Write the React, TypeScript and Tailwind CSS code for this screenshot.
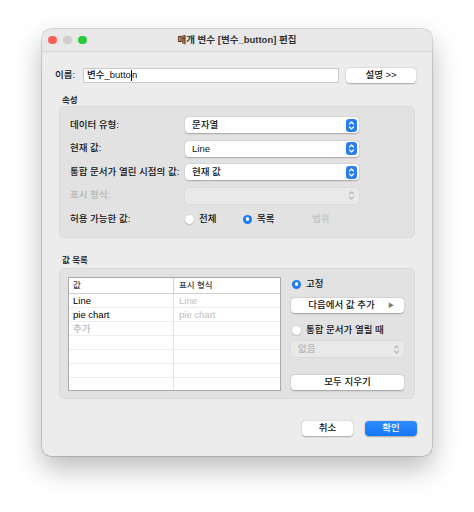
import React from "react";

const FONT = { fontFamily: '"Liberation Sans", "Noto Sans CJK KR", sans-serif' };

function Stepper({ disabled }: { disabled?: boolean }) {
  if (disabled) {
    return (
      <svg width="11" height="13" viewBox="0 0 11 13">
        <path d="M3.5 5 L5.5 3 L7.5 5" stroke="#b8b8b8" strokeWidth="1.1" fill="none" strokeLinecap="round" strokeLinejoin="round" />
        <path d="M3.5 8 L5.5 10 L7.5 8" stroke="#b8b8b8" strokeWidth="1.1" fill="none" strokeLinecap="round" strokeLinejoin="round" />
      </svg>
    );
  }
  return (
    <svg width="11" height="13" viewBox="0 0 11 13">
      <rect x="0" y="0" width="11" height="13" rx="3" fill="#2a7ef3" />
      <path d="M3.5 5 L5.5 3 L7.5 5" stroke="#fff" strokeWidth="1.2" fill="none" strokeLinecap="round" strokeLinejoin="round" />
      <path d="M3.5 8 L5.5 10 L7.5 8" stroke="#fff" strokeWidth="1.2" fill="none" strokeLinecap="round" strokeLinejoin="round" />
    </svg>
  );
}

function Select({ value, disabled, width = "w-[174px]" }: { value: string; disabled?: boolean; width?: string }) {
  return (
    <div
      className={`${width} h-[16px] rounded-[4px] flex items-center justify-between pl-[7px] pr-[2px] ${
        disabled
          ? "bg-[#e9e9e9] shadow-[0_0_0_0.5px_rgba(0,0,0,0.06)] text-[#b3b3b3]"
          : "bg-white shadow-[0_0.5px_1.5px_rgba(0,0,0,0.28)] text-[#111]"
      }`}
    >
      <span className="leading-none">{value}</span>
      <Stepper disabled={disabled} />
    </div>
  );
}

function Radio({ state }: { state: "on" | "off" | "disabled" }) {
  if (state === "on")
    return (
      <span className="w-[9px] h-[9px] rounded-full bg-[#1f7bf2] flex items-center justify-center shrink-0">
        <span className="w-[3.5px] h-[3.5px] rounded-full bg-white" />
      </span>
    );
  if (state === "disabled") return <span className="w-[9px] h-[9px] rounded-full bg-[#e2e2e2] shrink-0" />;
  return <span className="w-[9px] h-[9px] rounded-full bg-white shadow-[0_0.5px_1.5px_rgba(0,0,0,0.3)] shrink-0" />;
}

function Button({ children, className = "" }: { children: React.ReactNode; className?: string }) {
  return (
    <div
      className={`h-[15px] rounded-[4px] bg-white shadow-[0_0.5px_1.5px_rgba(0,0,0,0.3)] flex items-center justify-center text-[#111] ${className}`}
    >
      {children}
    </div>
  );
}

export default function App() {
  const rows = [
    { v: "Line", f: "Line" },
    { v: "pie chart", f: "pie chart" },
    { v: "추가", f: "", add: true },
    { v: "", f: "" },
    { v: "", f: "" },
    { v: "", f: "" },
    { v: "", f: "" },
  ];
  return (
    <div className="w-[474px] h-[512px] bg-white overflow-hidden text-[9.5px] font-medium text-[#111]" style={FONT}>
      <div className="ml-[42px] mt-[29px] w-[390px] h-[427px] rounded-[9px] bg-[#ececec] shadow-[0_12px_28px_rgba(0,0,0,0.28),0_0_0_0.5px_rgba(0,0,0,0.25)] flex flex-col overflow-hidden">
        {/* Title bar */}
        <div className="h-[23px] shrink-0 grid grid-cols-[1fr_auto_1fr] items-center bg-[#e8e8e8] border-b border-[#d6d6d6]">
          <div className="flex items-center gap-[6.5px] pl-[6px]">
            <span className="w-[8.5px] h-[8.5px] rounded-full bg-[#fe5f57]" />
            <span className="w-[8.5px] h-[8.5px] rounded-full bg-[#cfcfcf]" />
            <span className="w-[8.5px] h-[8.5px] rounded-full bg-[#28c840]" />
          </div>
          <div className="font-bold text-[9.5px] text-[#333]">매개 변수 [변수_button] 편집</div>
          <div />
        </div>

        {/* Name row */}
        <div className="mt-[16px] h-[15px] flex items-center pl-[13px]">
          <span className="w-[28px]">이름:</span>
          <div className="w-[256px] h-[15px] bg-white border border-[#c9c9c9] flex items-center pl-[3px]">
            <span>변수_butto</span>
            <span className="w-px h-[11px] bg-[#111]" />
            <span>n</span>
          </div>
          <Button className="ml-[7px] w-[70px]">설명 &gt;&gt;</Button>
        </div>

        {/* Properties */}
        <div className="mt-[12px] h-[11px] pl-[20px] font-bold text-[8.5px] leading-[11px] text-[#2a2a2a]">속성</div>
        <div className="ml-[17px] w-[356px] h-[132px] rounded-[5px] bg-[#e2e2e2] border border-[#dadada] flex flex-col pt-[10px] pl-[10px] gap-[7.5px]">
          <div className="h-[16px] flex items-center">
            <span className="w-[115px]">데이터 유형:</span>
            <Select value="문자열" />
          </div>
          <div className="h-[16px] flex items-center">
            <span className="w-[115px]">현재 값:</span>
            <Select value="Line" />
          </div>
          <div className="h-[16px] flex items-center">
            <span className="w-[115px]">통합 문서가 열린 시점의 값:</span>
            <Select value="현재 값" />
          </div>
          <div className="h-[16px] flex items-center">
            <span className="w-[115px] text-[#b5b5b5]">표시 형식:</span>
            <Select value="" disabled />
          </div>
          <div className="h-[16px] flex items-center">
            <span className="w-[115px]">허용 가능한 값:</span>
            <div className="flex items-center">
              <div className="flex items-center gap-[5px] w-[58px]">
                <Radio state="off" />
                <span>전체</span>
              </div>
              <div className="flex items-center gap-[5px] w-[55px]">
                <Radio state="on" />
                <span>목록</span>
              </div>
              <div className="flex items-center gap-[5px] text-[#c0c0c0]">
                <Radio state="disabled" />
                <span>범위</span>
              </div>
            </div>
          </div>
        </div>

        {/* Values list */}
        <div className="mt-[17px] h-[10px] pl-[20px] font-bold text-[8.5px] leading-[10px] text-[#2a2a2a]">값 목록</div>
        <div className="mt-[3px] ml-[17px] w-[356px] h-[131px] rounded-[5px] bg-[#e2e2e2] border border-[#dadada] flex pt-[8px] pl-[8px]">
          <div className="w-[213px] h-[114px] bg-white border border-[#a9a9a9] flex flex-col overflow-hidden">
            <div className="h-[16px] shrink-0 grid grid-cols-[105px_1fr] border-b border-[#d0d0d0] text-[8.5px] text-[#444]">
              <div className="flex items-center pl-[4px] border-r border-[#d0d0d0]">값</div>
              <div className="flex items-center pl-[5px]">표시 형식</div>
            </div>
            {rows.map((r, i) => (
              <div key={i} className="h-[14px] shrink-0 grid grid-cols-[105px_1fr] border-b border-[#eeeeee]">
                <div className={`flex items-center pl-[4px] border-r border-[#e6e6e6] ${r.add ? "text-[#b8b8b8]" : "text-[#000]"}`}>
                  {r.v}
                </div>
                <div className="flex items-center pl-[5px] text-[#bdbdbd]">{r.f}</div>
              </div>
            ))}
          </div>
          <div className="ml-[10px] w-[113px] flex flex-col">
            <div className="mt-[2px] h-[10px] flex items-center gap-[5px] pl-[1px]">
              <Radio state="on" />
              <span>고정</span>
            </div>
            <Button className="mt-[9px] h-[14px]">
              <div className="flex-1 text-center pl-[4px]">다음에서 값 추가</div>
              <span className="text-[6px] text-[#777] pr-[10px]">▶</span>
            </Button>
            <div className="mt-[12px] h-[10px] flex items-center gap-[5px] pl-[1px]">
              <Radio state="off" />
              <span>통합 문서가 열릴 때</span>
            </div>
            <div className="mt-[6px]">
              <Select value="없음" disabled width="w-[113px]" />
            </div>
            <Button className="mt-[18px]">모두 지우기</Button>
          </div>
        </div>

        {/* Bottom buttons */}
        <div className="mt-[22px] h-[15px] flex justify-end pr-[15px] gap-[12px]">
          <Button className="w-[51px]">취소</Button>
          <div className="w-[52px] h-[15px] rounded-[4px] bg-[linear-gradient(#2f8cfb,#1575f3)] shadow-[0_0.5px_1.5px_rgba(0,0,0,0.3)] flex items-center justify-center text-white">
            확인
          </div>
        </div>
      </div>
    </div>
  );
}
